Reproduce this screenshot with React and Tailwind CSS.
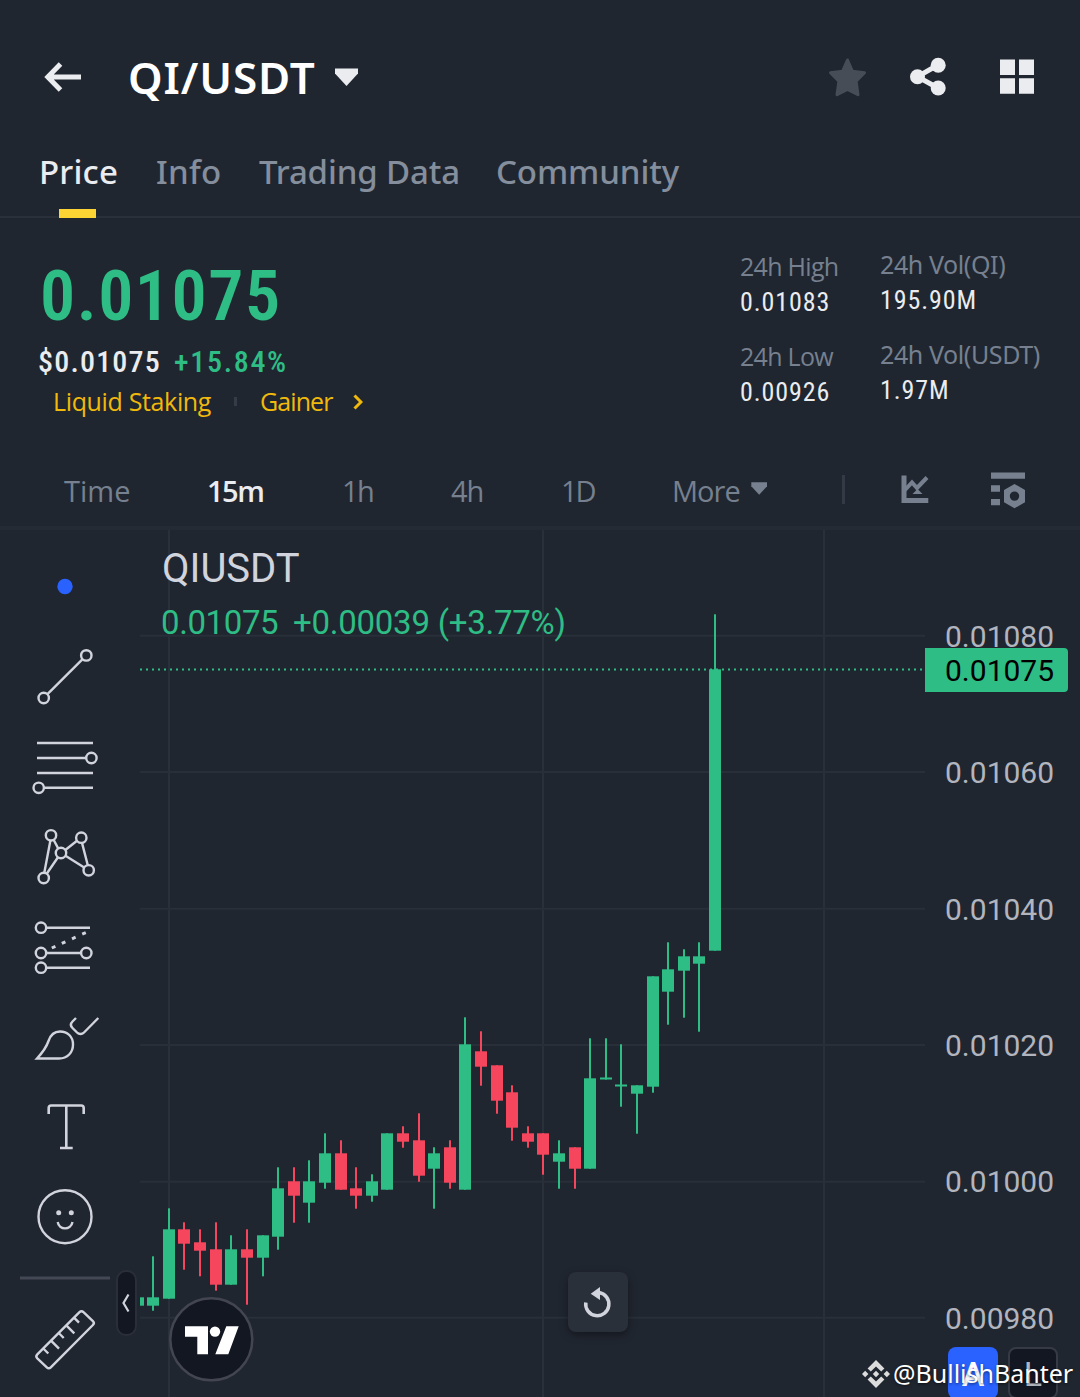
import React from 'react';

const UP = '#2ebd85';
const DOWN = '#f6465d';

// x, high, body top, body bottom, low, direction
const candles = [
    [138, 1297.3, 1297.3, 1305.7, 1305.7, 'up'],
    [153, 1256.3, 1297.3, 1305.7, 1310.7, 'up'],
    [169, 1208.3, 1229.3, 1298.7, 1298.7, 'up'],
    [184, 1222.3, 1229.3, 1243.7, 1269.7, 'down'],
    [200, 1229.3, 1242.3, 1250.7, 1276.3, 'down'],
    [216, 1222.3, 1249.3, 1284.7, 1290.7, 'down'],
    [231, 1235.3, 1249.3, 1284.7, 1284.7, 'up'],
    [247, 1229.3, 1249.3, 1257.7, 1304.7, 'down'],
    [263, 1235.3, 1235.3, 1257.7, 1276.3, 'up'],
    [278, 1167.3, 1188.3, 1236.7, 1249.7, 'up'],
    [294, 1167.3, 1181.3, 1195.7, 1222.7, 'down'],
    [309, 1160.3, 1181.3, 1202.7, 1222.7, 'up'],
    [325, 1133.3, 1153.3, 1182.7, 1188.7, 'up'],
    [341, 1140.3, 1153.3, 1189.7, 1189.7, 'down'],
    [356, 1167.3, 1188.3, 1195.7, 1208.7, 'down'],
    [372, 1174.3, 1181.3, 1195.7, 1201.7, 'up'],
    [387, 1133.3, 1133.3, 1189.7, 1189.7, 'up'],
    [403, 1126.3, 1133.3, 1141.7, 1147.7, 'down'],
    [419, 1113.3, 1140.3, 1175.7, 1181.7, 'down'],
    [434, 1147.3, 1153.3, 1168.7, 1208.7, 'up'],
    [450, 1140.3, 1147.3, 1182.7, 1188.7, 'down'],
    [465, 1017.3, 1044.3, 1189.7, 1189.7, 'up'],
    [481, 1031.3, 1051.3, 1066.7, 1085.7, 'down'],
    [497, 1065.3, 1065.3, 1100.7, 1113.7, 'down'],
    [512, 1085.3, 1092.3, 1127.7, 1140.7, 'down'],
    [528, 1126.3, 1133.3, 1141.7, 1147.7, 'down'],
    [543, 1133.3, 1133.3, 1154.7, 1174.7, 'down'],
    [559, 1140.3, 1153.3, 1161.7, 1188.7, 'up'],
    [575, 1147.3, 1147.3, 1168.7, 1188.7, 'down'],
    [590, 1038.3, 1078.3, 1168.7, 1168.7, 'up'],
    [606, 1038.3, 1077.5, 1079.5, 1079.5, 'up'],
    [621, 1044.3, 1084.5, 1086.5, 1106.7, 'up'],
    [637, 1085.3, 1085.3, 1093.7, 1133.7, 'up'],
    [653, 976.3, 976.3, 1086.7, 1092.7, 'up'],
    [668, 942.3, 969.3, 991.7, 1024.7, 'up'],
    [684, 949.3, 956.3, 970.7, 1017.7, 'up'],
    [699, 942.3, 956.3, 963.7, 1031.7, 'up'],
    [715, 614.3, 669.3, 950.7, 950.7, 'up'],
];

const axis = ['0.01080', '0.01060', '0.01040', '0.01020', '0.01000', '0.00980'];
const gridX = [169, 543, 824];
const gridY = [635.7, 772, 908.8, 1045, 1181.7, 1317.7];

function Header() {
    return (
        <header className="mt-[47px] flex h-[60px] items-center pl-11">
            <svg width="40" height="34" viewBox="44 60 40 34" fill="none" stroke="#eaecef" strokeWidth="5">
                <path d="M81 77H48M60.5 64L47.8 77l12.7 13" />
            </svg>
            <h1 className="ml-11 w-[207px] font-['Noto_Sans',sans-serif] text-[44px] leading-[60px] font-semibold tracking-[0.9px] text-white">
                QI/USDT
            </h1>
            <svg width="24" height="18" viewBox="335 67 24 18" fill="#eaecef" className="-mt-px">
                <path d="M335 67.5h23v5L346.5 85 335 72.5z" />
            </svg>
            <svg className="ml-[469px]" width="40" height="40" viewBox="828 57 40 40" fill="#474d57" stroke="#474d57" strokeWidth="3" strokeLinejoin="round">
                <path d="M847.5 60l4.8 11.2 12.2 1.5-8.4 8.5 1.9 13.5-10.5-5.2-10.5 5.2 1.9-13.5-8.4-8.5 12.2-1.5z" />
            </svg>
            <svg className="ml-[42px]" width="38" height="40" viewBox="910 57 38 40" fill="#eaecef">
                <path d="M938 65l-20.5 11.7L938 88" fill="none" stroke="#eaecef" strokeWidth="5" />
                <circle cx="938.2" cy="65.2" r="7.5" />
                <circle cx="917.5" cy="76.7" r="7.5" />
                <circle cx="938.2" cy="88" r="7.5" />
            </svg>
            <svg className="ml-[52px]" width="34" height="36" viewBox="1000 59 34 36" fill="#eaecef">
                <path d="M1000 59.5h15v15.5h-15zM1019 59.5h15v15.5h-15zM1000 78.2h15v15.5h-15zM1019 78.2h15v15.5h-15z" />
            </svg>
        </header>
    );
}

function Tabs() {
    return (
        <nav className="mt-[45px] grid h-[66px] grid-cols-[117px_103px_237px_auto] border-b-2 border-[#2a303a] pl-[39px] font-['Noto_Sans',sans-serif] text-[33px] leading-10 font-medium text-[#848e9c]">
            <div className="text-[#eaecef]">
                <span className="tracking-[0.2px]">Price</span>
                <div className="relative mt-[16.5px] ml-5 h-[9px] w-[37px] bg-[#fcd535]" />
            </div>
            <span className="tracking-[0.3px]">Info</span>
            <span className="tracking-[-0.15px]">Trading Data</span>
            <span className="tracking-[-0.1px]">Community</span>
        </nav>
    );
}

function Stat({ label, value, className }) {
    return (
        <div className="h-[90px]">
            <div className={`text-[25px] leading-[34px] whitespace-nowrap text-[#76808f] ${className}`}>{label}</div>
            <div className="mt-px font-[Roboto,sans-serif] text-[26px] leading-9 font-stretch-75% tracking-[0.9px] text-[#eaecef]">{value}</div>
        </div>
    );
}

function Summary() {
    return (
        <section className="flex h-[253px]">
            <div className="w-[740px] pt-[38px] pl-[38px]">
                <div className="pl-0.5 font-[Roboto,sans-serif] text-[70px] leading-[80px] font-semibold font-stretch-75% tracking-[1.5px] text-[#2ebd85]">
                    0.01075
                </div>
                <div className="mt-2 flex font-[Roboto,sans-serif] text-[30px] leading-9 font-medium font-stretch-75%">
                    <span className="w-[136px] tracking-[1.2px] text-[#eaecef]">$0.01075</span>
                    <span className="tracking-[1.7px] text-[#2ebd85]">+15.84%</span>
                </div>
                <div className="mt-[5px] flex items-center pl-[15px] font-['Open_Sans',sans-serif] text-[25px] leading-8 text-[#f0b90b]">
                    <span className="w-[181px] tracking-[-0.35px]">Liquid Staking</span>
                    <span className="h-[9px] w-[3px] bg-[#363c47]" />
                    <span className="ml-[23px] w-[93px] tracking-[-0.9px]">Gainer</span>
                    <svg className="mt-0.5" width="10" height="16" viewBox="353 394 10 16" fill="none" stroke="#f0b90b" strokeWidth="3">
                        <path d="M354.5 395.5L361 402l-6.5 6.5" />
                    </svg>
                </div>
            </div>
            <div className="w-[140px] pt-[31px] font-['Open_Sans',sans-serif]">
                <Stat label="24h High" value="0.01083" className="tracking-[-0.7px]" />
                <Stat label="24h Low" value="0.00926" className="tracking-[-0.7px]" />
            </div>
            <div className="pt-[29px] font-['Noto_Sans',sans-serif]">
                <Stat label="24h Vol(QI)" value="195.90M" className="tracking-[-0.4px]" />
                <Stat label="24h Vol(USDT)" value="1.97M" className="tracking-[-0.4px]" />
            </div>
        </section>
    );
}

function Intervals() {
    return (
        <nav className="grid h-[59px] grid-cols-[143px_135px_109px_110px_111px_79px_91px_59px_90px_auto] border-b-4 border-[#252b35] pl-16 font-['Open_Sans',sans-serif] text-[29px] leading-10 text-[#76808f]">
            <span>Time</span>
            <span className="font-semibold tracking-[-1.5px] text-[#eaecef]">15m</span>
            <span className="tracking-[-1.5px]">1h</span>
            <span className="tracking-[-1px]">4h</span>
            <span className="tracking-[-2px]">1D</span>
            <span className="tracking-[-1px]">More</span>
            <svg className="mt-[11px]" width="16" height="13" viewBox="751 482 16 13" fill="#76808f">
                <path d="M751.3 482.3h15.7v4l-7.8 8.5-7.9-8.5z" />
            </svg>
            <div className="mt-1 h-[29px] w-[3px] bg-[#343a45]" />
            <svg className="mt-[3px]" width="28" height="30" viewBox="901 474 28 30" fill="none" stroke="#76808f">
                <path d="M904 475.5V500.5H928.3" strokeWidth="5" />
                <path d="M904 491l8-8.5 5 5.5 10-10.5" strokeWidth="4" />
                <path d="M917.5 489l5 5h-10z" fill="#76808f" stroke="none" />
            </svg>
            <svg width="36" height="38" viewBox="991 471 36 38" fill="#76808f">
                <path d="M991 472.5h34v6.2h-34zM991 485.3h9v6.4h-9zM991 499h9v6.3h-9z" />
                <path fillRule="evenodd" d="M1014.5 484l10.5 6v12.3l-10.5 6-10.5-6V490zM1014.5 491.4a4.7 4.7 0 1 0 0 9.4a4.7 4.7 0 1 0 0-9.4z" />
            </svg>
        </nav>
    );
}

function Toolbar() {
    return (
        <svg className="shrink-0" width="140" height="867" viewBox="0 530 140 867" fill="none" stroke="#d1d4dc" strokeWidth="2.4">
            <circle cx="65" cy="586.5" r="7.7" fill="#2962ff" stroke="none" />

            {/* trend line */}
            <path d="M47.5 694.2L82.6 659.1" />
            <circle cx="86.3" cy="655.4" r="5.2" />
            <circle cx="43.7" cy="698" r="5.2" />

            {/* fib retracement */}
            <path d="M37 743h56M37 758h49M37 773h56M44 787.8h49" />
            <circle cx="91.4" cy="758" r="5.2" />
            <circle cx="38.7" cy="787.8" r="5.2" />

            {/* pattern */}
            <path d="M53.6 839.8L58.3 848.6M65.3 850L77 840.8M58 857.3L46.7 873.7M65.5 855.8L84.2 867.5M50.4 840.5L44.3 872.8M82 842.9L87.8 865.2" />
            <circle cx="51" cy="835.3" r="5.2" />
            <circle cx="81.3" cy="837.7" r="5.2" />
            <circle cx="61" cy="853" r="5.2" />
            <circle cx="43.7" cy="878" r="5.2" />
            <circle cx="88.7" cy="870.3" r="5.2" />

            {/* forecast */}
            <path d="M46 927.7h44M46 953h35M46 967.7h44" />
            <path d="M51.8 948l3.6-1.6M61.8 943.4l3.6-1.6M72 938.8l3.6-1.6M82.2 934.2l3.6-1.6" strokeWidth="3" />
            <circle cx="41" cy="927.7" r="5.2" />
            <circle cx="41" cy="953" r="5.2" />
            <circle cx="86.3" cy="953" r="5.2" />
            <circle cx="41" cy="967.7" r="5.2" />

            {/* brush */}
            <path d="M37 1058.5H59C67.5 1058.5 73 1052.5 73 1044.5C73 1036.5 67.5 1031.5 60 1031.5C54 1031.5 50.5 1035 48.5 1041C46.5 1047 43 1052 37 1058.5Z" />
            <path d="M76 1018l-3.5 3.5c-2 2-2 4.5 0 6.5l4.5 4.500c2 2 5 2 7 0L98.3 1018" />

            {/* text tool */}
            <path d="M48.7 1114v-6q0-2.5 2.5-2.5h30q2.5 0 2.5 2.5v6M66.3 1106v42M60 1148h12.7" strokeWidth="2.6" />

            {/* emoji */}
            <circle cx="65" cy="1216.7" r="26.5" />
            <circle cx="58.7" cy="1212.8" r="2.5" fill="#d1d4dc" stroke="none" />
            <circle cx="71.3" cy="1212.8" r="2.5" fill="#d1d4dc" stroke="none" />
            <path d="M57.7 1222c1.3 8.5 13.3 8.5 14.8 0" />

            <path d="M20 1278h90" stroke="#434854" strokeWidth="3" />

            {/* ruler */}
            <path d="M79.5 1312.2L37.3 1354.4q-2 2 0 4L46.8 1367.3q2 2 4 0L92.9 1325q2-2 0-4L83.5 1312.2q-2-2-4 0z" />
            <path d="M43.3 1348.5l5 5M51 1340.7l8 8M58.7 1333l5 5M66.3 1325.3l8 8M74 1317.6l5 5" />
        </svg>
    );
}

function Plot() {
    return (
        <svg className="shrink-0" width="785" height="867" viewBox="140 530 785 867">
            {gridX.map((x) => (
                <rect key={x} x={x - 1} y="530" width="2" height="867" fill="#2a303a" />
            ))}
            {gridY.map((y) => (
                <rect key={y} x="140" y={y - 1} width="785" height="2" fill="#292f39" />
            ))}
            <path d="M140 669.5H925" stroke={UP} strokeWidth="2" strokeDasharray="2 4" />
            {candles.map(([x, high, top, bottom, low, dir]) => (
                <g key={x} fill={dir === 'up' ? UP : DOWN}>
                    <rect x={x - 1} y={high} width="2" height={low - high} />
                    <rect x={x - 6} y={top} width="12" height={bottom - top} />
                </g>
            ))}
        </svg>
    );
}

function PriceAxis() {
    return (
        <div className="relative w-[155px] font-[Roboto,sans-serif] text-[30px] text-[#b2b5be]">
            <div className="pt-[38.8px] pl-5">
                {axis.map((price) => (
                    <div key={price} className="h-[136.4px] leading-[136.4px]">
                        {price}
                    </div>
                ))}
            </div>
            <div className="absolute top-[117.5px] left-0 h-11 w-[143px] rounded-r bg-[#2ebd85] pl-5 leading-[45px] text-black">
                0.01075
            </div>
            <div className="absolute top-[817px] left-[23px] flex gap-2.5 text-[34px] leading-[54px]">
                <div className="h-[52px] w-[50px] rounded-lg bg-[#2962ff] text-center font-medium text-white">A</div>
                <div className="h-[52px] w-[50px] rounded-lg border-2 border-[#363a45] bg-[#131722] text-center leading-[50px]">L</div>
            </div>
        </div>
    );
}

function Watermark() {
    return (
        <div className="absolute top-[825px] left-[862px] flex items-center gap-[3px] font-['Noto_Sans',sans-serif] text-[25px] leading-[38px] text-white [text-shadow:0_1px_3px_rgba(0,0,0,0.6)]">
            <svg width="28" height="28" viewBox="0 0 28 28" fill="#dcdcdc">
                <path d="M14 0l8.4 8.4-3.2 3.2L14 6.4l-5.2 5.2-3.2-3.2zM14 28l-8.4-8.4 3.2-3.2 5.2 5.2 5.2-5.2 3.2 3.2zM14 10.8l3.2 3.2-3.2 3.2-3.2-3.2zM3.2 10.8L6.4 14l-3.2 3.2L0 14zM24.8 10.8L28 14l-3.2 3.2-3.2-3.2z" />
            </svg>
            <span className="-mt-px">@BullishBanter</span>
        </div>
    );
}

function Chart() {
    return (
        <main className="relative flex h-[867px] overflow-hidden">
            <Toolbar />
            <Plot />
            <PriceAxis />

            <div className="absolute top-[13px] left-[161px] font-[Roboto,sans-serif]">
                <div className="pl-px text-[40px] leading-[51px] text-[#d1d4dc]">QIUSDT</div>
                <div className="mt-[5px] flex text-[33px] leading-[48px] text-[#2ebd85]">
                    <span className="w-[132px] tracking-[-0.4px]">0.01075</span>
                    <span className="tracking-[-0.25px]">+0.00039 (+3.77%)</span>
                </div>
            </div>

            <div className="absolute top-[740px] left-[116px] flex h-[66px] w-[21px] items-center justify-center rounded-[10px] border-2 border-[#2a2e39] bg-[#131722]">
                <svg className="-ml-0.5" width="8" height="20" viewBox="0 0 8 20" fill="none" stroke="#d1d4dc" strokeWidth="2.2">
                    <path d="M6.5 1.5L1.5 10l5 8.5" />
                </svg>
            </div>

            <svg className="absolute top-[767px] left-[169px]" width="85" height="85" viewBox="169 1297 85 85">
                <circle cx="211.3" cy="1339.3" r="41" fill="#131722" stroke="#434651" strokeWidth="2.5" />
                <g fill="#fff">
                    <path d="M185 1326.3h23v28h-10.7v-17.6H185zM226.3 1326.3h12.4l-10.4 28h-13z" />
                    <circle cx="215" cy="1331.6" r="5.2" />
                </g>
            </svg>

            <div className="absolute top-[742px] left-[568px] h-[60px] w-[60px] rounded-lg bg-[#2a303a] shadow-[0_3px_8px_rgba(0,0,0,0.4)]">
                <svg width="60" height="60" viewBox="568 1272 60 60" fill="none">
                    <path d="M585.8 1302.5A11.6 11.6 0 1 0 599 1292.6" stroke="#d1d4dc" strokeWidth="3.5" />
                    <path d="M590.7 1293.8L600 1287v13z" fill="#d1d4dc" />
                </svg>
            </div>

            <Watermark />
        </main>
    );
}

export default function App() {
    return (
        <div className="flex h-[1397px] w-[1080px] flex-col overflow-hidden bg-[#202630]">
            <Header />
            <Tabs />
            <Summary />
            <Intervals />
            <Chart />
        </div>
    );
}
